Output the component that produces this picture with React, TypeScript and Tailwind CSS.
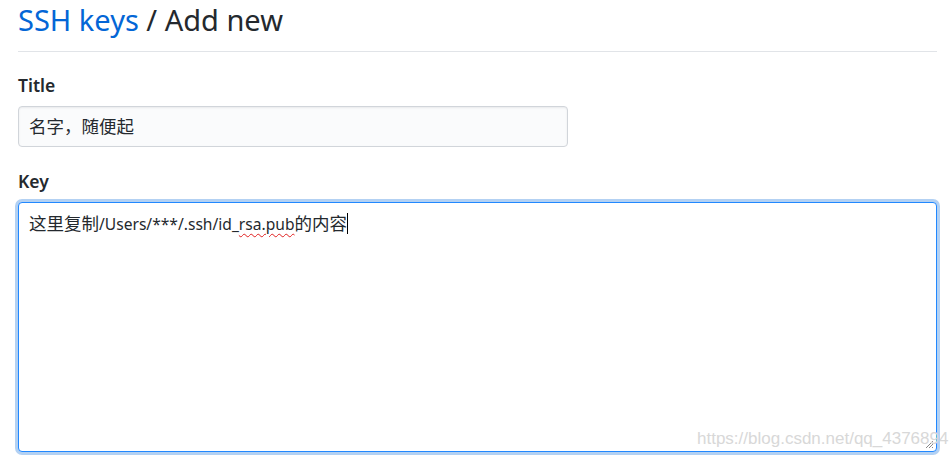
import React from 'react';

const FONT = { fontFamily: '"Segoe UI", "Noto Sans", "Noto Sans CJK SC", sans-serif' };

export default function App() {
  return (
    <div className="relative w-[949px] h-[460px] bg-white overflow-hidden text-[#24292e]" style={FONT}>
      <div className="pl-[18px] pr-[12px]">
        {/* Subhead */}
        <div className="border-b border-[#e1e4e8] pb-[11px]">
          <h1 className="text-[29px] leading-[40px] font-normal">
            <a className="text-[#0366d6]">SSH keys</a> / Add new
          </h1>
        </div>

        {/* Title */}
        <div className="mt-[22px]">
          <label className="block text-[17.5px] leading-[22px] font-semibold mb-[10px]">Title</label>
          <div className="w-[550px] h-[41px] bg-[#fafbfc] border border-[#d1d5da] rounded-[4px] px-[10px] flex items-center text-[17.5px] shadow-[inset_0_1px_2px_rgba(27,31,35,0.075)]">
            名字，随便起
          </div>
        </div>

        {/* Key */}
        <div className="mt-[23px]">
          <label className="block text-[17.5px] leading-[22px] font-semibold mb-[10px]">Key</label>
          <div className="relative w-[919px] h-[250px] bg-white border border-[#2188ff] rounded-[4px] px-[10px] pt-[7px] text-[17.5px] leading-[26px] shadow-[0_0_0_3px_rgba(3,102,214,0.3)]">
            <span>这里复制</span>
            <span className="text-[15.6px]">/Users/***/.ssh/id_</span>
            <span className="text-[15.6px] underline decoration-wavy decoration-[#e02020] decoration-1 underline-offset-[3px]">rsa.pub</span>
            <span>的内容</span>
            <span className="inline-block w-px h-[21px] bg-black align-middle -mt-[3px]" />
            <svg className="absolute right-[2px] bottom-[2px]" width="9" height="9" viewBox="0 0 9 9">
              <path d="M8 1L1 8M8 4L4 8M8 7L7 8" stroke="#888" strokeWidth="1" />
            </svg>
          </div>
        </div>
      </div>

      {/* watermark */}
      <div
        className="absolute left-[697px] top-[429px] text-[17px] leading-[20px] text-[#d8d8d8] whitespace-nowrap"
        style={{ fontFamily: '"Liberation Sans", Arial, sans-serif' }}
      >
        https://blog.csdn.net/qq_43768946
      </div>
    </div>
  );
}
